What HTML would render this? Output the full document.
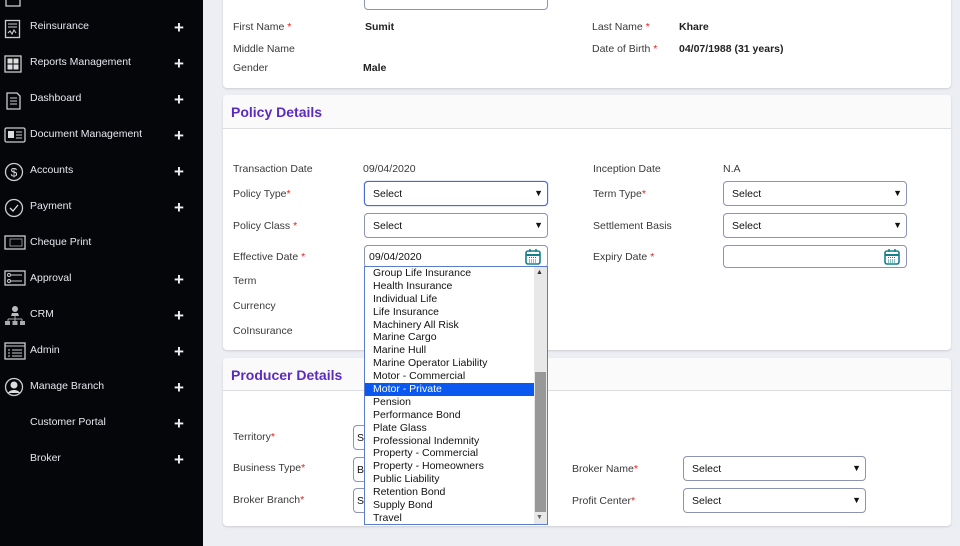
<!DOCTYPE html>
<html><head><style>
*{box-sizing:border-box;margin:0;padding:0}
body{width:960px;height:546px;overflow:hidden;background:#edeef3;font-family:"Liberation Sans",sans-serif;position:relative}
.sb{position:absolute;left:0;top:0;width:203px;height:546px;background:#05060a}
.mi{position:absolute;left:30px;color:#e6e8ee;font-size:10.5px}
.pl{position:absolute;left:174px;color:#f0f0f4;font-size:17px;line-height:16px;font-weight:bold}
.ic{position:absolute;left:4px}
.card{position:absolute;left:223px;width:728px;background:#fff;border-radius:4px;box-shadow:0 1px 2px rgba(0,0,0,.15)}
.hd{height:34px;border-bottom:1px solid #dcdde3;background:#fafafa;border-radius:4px 4px 0 0;color:#5b2bc0;font-weight:bold;font-size:14px;padding:9px 8px}
.t{position:absolute;font-size:10.5px;color:#3a3a3a}
.b{font-weight:bold;color:#222}
.r{color:#e02020}
.sel{position:absolute;height:25px;border:1px solid #8d93b3;border-radius:4px;font-size:10.5px;color:#111;padding:6px 8px;background:#fff}
.sel:after{content:"▼";position:absolute;right:4px;top:6px;font-size:9px}
.nc:after{content:""}
.cal{position:absolute;right:6px;top:3px}
.dd{position:absolute;left:364px;top:266px;width:184px;height:259px;background:#fff;border:1px solid #5a7bd0;font-size:10.5px;color:#111}
.dd div{height:12.9px;line-height:12.9px;padding-left:8px;width:169px}
.dd .s{background:#0b58f0;color:#fff}
</style></head><body>
<div class="sb">
<svg class="ic" style="top:0" width="18" height="8"><rect x="2" y="-6" width="14" height="12" fill="none" stroke="#ccc" stroke-width="1.3"/></svg>
<svg class="ic" style="top:19" width="18" height="20" viewBox="0 0 18 20"><rect x="1.5" y="1.5" width="14" height="17" fill="none" stroke="#ccc" stroke-width="1.3"/><path d="M4 5h9M4 8h9M4 14l2-2 2 3 2-4 2 3" stroke="#ccc" fill="none" stroke-width="1.1"/></svg>
<svg class="ic" style="top:55" width="18" height="18"><rect x="1" y="1" width="16" height="16" fill="none" stroke="#ccc" stroke-width="1.3"/><rect x="3.5" y="3.5" width="5" height="5" fill="#ddd"/><rect x="9.5" y="3.5" width="5" height="5" fill="#ddd"/><rect x="3.5" y="9.5" width="5" height="5" fill="#ddd"/><rect x="9.5" y="9.5" width="5" height="5" fill="#ddd"/></svg>
<svg class="ic" style="top:90" width="18" height="20"><path d="M3 3h10l3 3v13H3z" fill="none" stroke="#ccc" stroke-width="1.3"/><path d="M6 8h7M6 11h7M6 14h7" stroke="#ccc"/></svg>
<svg class="ic" style="top:127" width="22" height="16"><rect x="1" y="1" width="20" height="14" rx="1.5" fill="none" stroke="#ccc" stroke-width="1.3"/><rect x="4" y="4" width="6" height="7" fill="#ddd"/><path d="M12 5h6M12 8h6M12 11h6" stroke="#ccc"/></svg>
<svg class="ic" style="top:162" width="20" height="20"><circle cx="10" cy="10" r="8.5" fill="none" stroke="#ccc" stroke-width="1.3"/><text x="10" y="14.5" fill="#ddd" font-size="12" text-anchor="middle" font-family="Liberation Sans">$</text></svg>
<svg class="ic" style="top:198" width="20" height="20"><circle cx="10" cy="10" r="8.5" fill="none" stroke="#ccc" stroke-width="1.3"/><path d="M6 10l3 3 5-6" stroke="#ddd" fill="none" stroke-width="1.3"/></svg>
<svg class="ic" style="top:235" width="22" height="15"><rect x="1" y="1" width="20" height="13" fill="none" stroke="#ccc" stroke-width="1.3"/><rect x="6" y="4" width="12" height="7" fill="none" stroke="#aaa" stroke-width=".8"/></svg>
<svg class="ic" style="top:270" width="22" height="16"><rect x="1" y="1" width="20" height="14" fill="none" stroke="#ccc" stroke-width="1.3"/><path d="M4 5h14M4 11h14" stroke="#ccc"/><circle cx="5" cy="5" r="1.5" fill="#05060a" stroke="#ccc"/><circle cx="5" cy="11" r="1.5" fill="#05060a" stroke="#ccc"/></svg>
<svg class="ic" style="top:305" width="22" height="22"><circle cx="11" cy="4" r="3" fill="#bbb"/><path d="M7 11h8l-1-3H8z" fill="#bbb"/><path d="M11 11v3M4 14h14M4 14v2M11 14v2M18 14v2" stroke="#aaa"/><rect x="1" y="16" width="5" height="4" fill="#aaa"/><rect x="8.5" y="16" width="5" height="4" fill="#aaa"/><rect x="16" y="16" width="5" height="4" fill="#aaa"/></svg>
<svg class="ic" style="top:342" width="22" height="18"><rect x="1" y="1" width="20" height="16" fill="none" stroke="#ccc" stroke-width="1.3"/><path d="M1 4h20M4 8h2M8 8h10M4 11h2M8 11h10M4 14h2M8 14h10" stroke="#ccc"/></svg>
<svg class="ic" style="top:377" width="20" height="20"><circle cx="10" cy="10" r="8.5" fill="none" stroke="#ccc" stroke-width="1.3"/><circle cx="10" cy="8" r="3.5" fill="#ddd"/><path d="M4 16c2-4 10-4 12 0" fill="#ddd"/></svg>
<div class="mi" style="top:20px">Reinsurance</div><div class="pl" style="top:20px">+</div>
<div class="mi" style="top:56px">Reports Management</div><div class="pl" style="top:56px">+</div>
<div class="mi" style="top:92px">Dashboard</div><div class="pl" style="top:92px">+</div>
<div class="mi" style="top:128px">Document Management</div><div class="pl" style="top:128px">+</div>
<div class="mi" style="top:164px">Accounts</div><div class="pl" style="top:164px">+</div>
<div class="mi" style="top:200px">Payment</div><div class="pl" style="top:200px">+</div>
<div class="mi" style="top:236px">Cheque Print</div>
<div class="mi" style="top:272px">Approval</div><div class="pl" style="top:272px">+</div>
<div class="mi" style="top:308px">CRM</div><div class="pl" style="top:308px">+</div>
<div class="mi" style="top:344px">Admin</div><div class="pl" style="top:344px">+</div>
<div class="mi" style="top:380px">Manage Branch</div><div class="pl" style="top:380px">+</div>
<div class="mi" style="top:416px">Customer Portal</div><div class="pl" style="top:416px">+</div>
<div class="mi" style="top:452px">Broker</div><div class="pl" style="top:452px">+</div>
</div>

<div class="card" style="top:-10px;height:98px"></div>
<div class="sel nc" style="left:364px;top:-15px;width:184px;height:25px"></div>
<div class="t" style="left:233px;top:21px">First Name <span class="r">*</span></div>
<div class="t b" style="left:365px;top:21px">Sumit</div>
<div class="t" style="left:592px;top:21px">Last Name <span class="r">*</span></div>
<div class="t b" style="left:679px;top:21px">Khare</div>
<div class="t" style="left:233px;top:43px">Middle Name</div>
<div class="t" style="left:592px;top:43px">Date of Birth <span class="r">*</span></div>
<div class="t b" style="left:679px;top:43px">04/07/1988 (31 years)</div>
<div class="t" style="left:233px;top:62px">Gender</div>
<div class="t b" style="left:363px;top:62px">Male</div>

<div class="card" style="top:95px;height:255px"><div class="hd">Policy Details</div></div>
<div class="t" style="left:233px;top:163px">Transaction Date</div>
<div class="t" style="left:363px;top:163px">09/04/2020</div>
<div class="t" style="left:593px;top:163px">Inception Date</div>
<div class="t" style="left:723px;top:163px">N.A</div>
<div class="t" style="left:233px;top:188px">Policy Type<span class="r">*</span></div>
<div class="sel" style="left:364px;top:181px;width:184px;border-color:#4a6ad8;box-shadow:0 0 1px #4a6ad8">Select</div>
<div class="t" style="left:593px;top:188px">Term Type<span class="r">*</span></div>
<div class="sel" style="left:723px;top:181px;width:184px">Select</div>
<div class="t" style="left:233px;top:220px">Policy Class <span class="r">*</span></div>
<div class="sel" style="left:364px;top:213px;width:184px">Select</div>
<div class="t" style="left:593px;top:220px">Settlement Basis</div>
<div class="sel" style="left:723px;top:213px;width:184px">Select</div>
<div class="t" style="left:233px;top:251px">Effective Date <span class="r">*</span></div>
<div class="sel nc" style="left:364px;top:245px;width:184px;height:23px;padding:5px 4px">09/04/2020<svg class="cal" width="16" height="16"><rect x="1" y="2" width="14" height="13" rx="2" fill="none" stroke="#16808a" stroke-width="1.6"/><path d="M1 6h14" stroke="#16808a" stroke-width="2"/><path d="M5 0v3M11 0v3" stroke="#16808a" stroke-width="1.5"/><path d="M4 8.5h8M4 11h8M4 13h8" stroke="#16808a" stroke-dasharray="1 1"/></svg></div>
<div class="t" style="left:593px;top:251px">Expiry Date <span class="r">*</span></div>
<div class="sel nc" style="left:723px;top:245px;width:184px;height:23px"><svg class="cal" width="16" height="16"><rect x="1" y="2" width="14" height="13" rx="2" fill="none" stroke="#16808a" stroke-width="1.6"/><path d="M1 6h14" stroke="#16808a" stroke-width="2"/><path d="M5 0v3M11 0v3" stroke="#16808a" stroke-width="1.5"/><path d="M4 8.5h8M4 11h8M4 13h8" stroke="#16808a" stroke-dasharray="1 1"/></svg></div>
<div class="t" style="left:233px;top:275px">Term</div>
<div class="t" style="left:233px;top:300px">Currency</div>
<div class="t" style="left:233px;top:325px">CoInsurance</div>

<div class="card" style="top:358px;height:168px"><div class="hd" style="height:33px">Producer Details</div></div>
<div class="t" style="left:233px;top:431px">Territory<span class="r">*</span></div>
<div class="sel nc" style="left:353px;top:425px;width:20px;padding:6px 3px">S</div>
<div class="t" style="left:233px;top:462px">Business Type<span class="r">*</span></div>
<div class="sel nc" style="left:353px;top:457px;width:20px;padding:6px 3px">B</div>
<div class="t" style="left:233px;top:494px">Broker Branch<span class="r">*</span></div>
<div class="sel nc" style="left:353px;top:488px;width:20px;padding:6px 3px">S</div>
<div class="t" style="left:572px;top:463px">Broker Name<span class="r">*</span></div>
<div class="sel" style="left:683px;top:456px;width:183px">Select</div>
<div class="t" style="left:572px;top:495px">Profit Center<span class="r">*</span></div>
<div class="sel" style="left:683px;top:488px;width:183px">Select</div>

<div class="dd">
<div>Group Life Insurance</div><div>Health Insurance</div><div>Individual Life</div><div>Life Insurance</div><div>Machinery All Risk</div><div>Marine Cargo</div><div>Marine Hull</div><div>Marine Operator Liability</div><div>Motor - Commercial</div><div class="s">Motor - Private</div><div>Pension</div><div>Performance Bond</div><div>Plate Glass</div><div>Professional Indemnity</div><div>Property - Commercial</div><div>Property - Homeowners</div><div>Public Liability</div><div>Retention Bond</div><div>Supply Bond</div><div>Travel</div>
<div style="position:absolute;right:0;top:0;width:13px;height:257px;background:#e8e8e8;padding:0"></div>
<div style="position:absolute;right:1px;top:105px;width:11px;height:140px;background:#989898;padding:0"></div>
<div style="position:absolute;right:3px;top:0;width:8px;height:12px;font-size:7px;color:#333;padding:0">▲</div>
<div style="position:absolute;right:3px;top:245px;width:8px;height:12px;font-size:7px;color:#666;padding:0">▼</div>
</div>
</body></html>
